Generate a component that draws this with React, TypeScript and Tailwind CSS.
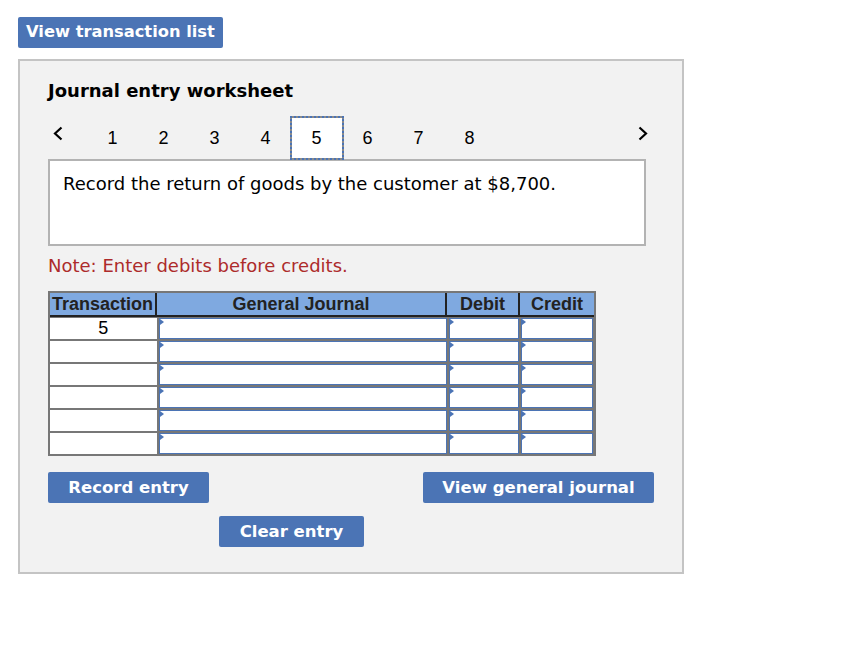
import React from "react";

const verdana = { fontFamily: '"DejaVu Sans", Verdana, sans-serif' };
const arial = { fontFamily: '"Liberation Sans", Arial, sans-serif' };

const Marker = () => (
    <span className="absolute left-0 top-0 w-0 h-0 border-y-[3px] border-y-transparent border-l-[4px] border-l-[#4b74b5]" />
);

const InputCell = ({ w }: { w: string }) => (
    <div className={`relative h-[21px] bg-white border border-[#4b74b5] ${w}`}>
        <Marker />
    </div>
);

const pages = [1, 2, 3, 4, 5, 6, 7, 8];

const App = () => {
    return (
        <div className="w-[854px] h-[660px] bg-white pt-[17px] pl-[18px]" style={verdana}>
            <button className="h-[31px] px-[8px] rounded-[2px] bg-[#4b74b5] text-white font-bold text-[16.3px]">
                View transaction list
            </button>

            <div className="mt-[11px] w-[666px] border-2 border-[#c4c4c4] bg-[#f2f2f2] pl-[28px] pt-[17px] pb-[25px]">
                <h2 className="text-[18px] font-bold text-black leading-[26px]">Journal entry worksheet</h2>

                <div className="mt-[12px] flex items-center h-[44px] w-[598px]" style={arial}>
                    <div className="w-[39px] pl-[5px] mb-[10px] flex items-center">
                        <svg width="10" height="15" viewBox="0 0 10 15">
                            <polyline points="8.5,1.5 2,7.5 8.5,13.5" fill="none" stroke="#000" strokeWidth="2.2" />
                        </svg>
                    </div>
                    {pages.map((p) =>
                        p === 5 ? (
                            <div key={p} className="w-[51px] h-[44px] flex items-center justify-center">
                                <div className="w-[54px] h-[44px] shrink-0 outline-2 outline-dotted outline-[#4b74b5] -outline-offset-2 border-2 border-[#8a8a8a] bg-white flex items-center justify-center text-[18px]">
                                    {p}
                                </div>
                            </div>
                        ) : (
                            <div key={p} className="w-[51px] text-center text-[18px]">
                                {p}
                            </div>
                        )
                    )}
                    <div className="ml-auto mr-[-2px] mb-[10px] flex items-center">
                        <svg width="10" height="15" viewBox="0 0 10 15">
                            <polyline points="1.5,1.5 8,7.5 1.5,13.5" fill="none" stroke="#000" strokeWidth="2.2" />
                        </svg>
                    </div>
                </div>

                <div className="-mt-[1px] w-[598px] h-[87px] border-2 border-[#b3b3b3] bg-white px-[13px] pt-[9px] text-[18px] leading-[27px] text-black">
                    Record the return of goods by the customer at $8,700.
                </div>

                <p className="mt-[7px] text-[18px] text-[#ad2b2b] leading-[26px]">Note: Enter debits before credits.</p>

                <div className="mt-[12px] w-[548px] border-2 border-[#777777] bg-[#777777]" style={arial}>
                    <div className="flex h-[24px] bg-[#7fa9e0] border-b-2 border-[#222] text-[18px] font-bold text-[#222] leading-[22px]">
                        <div className="w-[107px] text-center border-r-2 border-[#222]">Transaction</div>
                        <div className="w-[290px] text-center border-r-2 border-[#222]">General Journal</div>
                        <div className="w-[73px] text-center border-r-2 border-[#222]">Debit</div>
                        <div className="flex-1 text-center">Credit</div>
                    </div>
                    <div className="flex flex-col gap-[2px] pt-[1px]">
                        {[0, 1, 2, 3, 4, 5].map((i) => (
                            <div key={i} className="flex gap-[2px] pr-[1px]">
                                <div className="w-[107px] h-[21px] bg-white text-center text-[18px] leading-[21px]">
                                    {i === 0 ? "5" : ""}
                                </div>
                                <InputCell w="w-[289px]" />
                                <InputCell w="w-[71px]" />
                                <InputCell w="w-[72px]" />
                            </div>
                        ))}
                    </div>
                </div>

                <div className="mt-[16px] w-[606px] flex justify-between">
                    <button className="w-[161px] h-[31px] pt-[2px] rounded-[2px] bg-[#4b74b5] text-white font-bold text-[16.5px]">
                        Record entry
                    </button>
                    <button className="w-[231px] h-[31px] pt-[2px] rounded-[2px] bg-[#4b74b5] text-white font-bold text-[16.5px]">
                        View general journal
                    </button>
                </div>
                <div className="mt-[13px] pl-[171px]">
                    <button className="w-[145px] h-[31px] pt-[2px] rounded-[2px] bg-[#4b74b5] text-white font-bold text-[16.5px]">
                        Clear entry
                    </button>
                </div>
            </div>
        </div>
    );
};

export default App;
